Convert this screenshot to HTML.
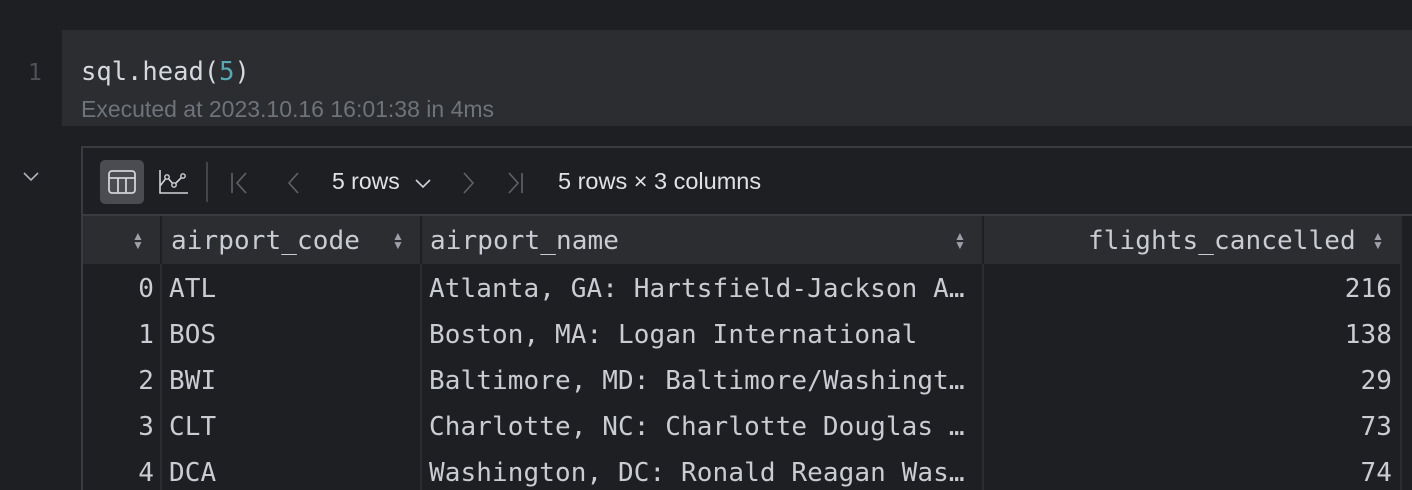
<!DOCTYPE html>
<html><head><style>
*{margin:0;padding:0;box-sizing:border-box}
html,body{width:1412px;height:490px;overflow:hidden}
body{background:#1e1f22;position:relative;font-family:"Liberation Sans",sans-serif;color:#dfe1e5}
.abs{position:absolute}
.mono{font-family:"DejaVu Sans Mono","Liberation Mono",monospace}
.code{left:62px;top:30px;width:1350px;height:96px;background:#2b2d30}
.ln{left:28px;top:60px;font-size:23px;color:#4e5157}
.tbl{left:81px;top:146px;width:1340px;height:360px;border:2px solid #393b40;border-right:none}
.hdr{left:83px;top:216px;width:1317px;height:48px;background:#2b2d30}
.vl{width:2px;background:#1e1f22}
.bl{width:2px;background:#2b2d30}
.cell{font-size:26px;color:#c9ccd2;white-space:pre;letter-spacing:0.1px}
.sort{font-size:12px;color:#9da0a8;line-height:9px;text-align:center;width:12px}
</style></head><body>
<div class="abs ln mono">1</div>
<div class="abs code"></div>
<div class="abs mono" style="left:81px;top:57px;font-size:25.5px;color:#d5d8de">sql.head(<span style="color:#56a8b5">5</span>)</div>
<div class="abs" style="left:81px;top:96px;font-size:23px;color:#6f737a">Executed at 2023.10.16 16:01:38 in 4ms</div>
<svg class="abs" style="left:22px;top:170px" width="18" height="12"><path d="M2 3 L9 10 L16 3" stroke="#aeb1b7" stroke-width="1.6" fill="none"/></svg>
<div class="abs tbl"></div>
<div class="abs" style="left:100px;top:160px;width:44px;height:44px;background:#4a4c52;border-radius:5px"></div>
<svg class="abs" style="left:107px;top:168px" width="30" height="28"><rect x="2" y="3" width="26" height="22" rx="3" stroke="#cfd2d8" stroke-width="1.8" fill="none"/><path d="M2 10H28M11 10V25M19 10V25" stroke="#cfd2d8" stroke-width="1.8"/></svg>
<svg class="abs" style="left:158px;top:168px" width="32" height="28"><path d="M2 2V25H30M2 18L9 9L16 17L25 8" stroke="#cfd2d8" stroke-width="1.6" fill="none"/><circle cx="9" cy="9" r="2.2" fill="#1e1f22" stroke="#cfd2d8" stroke-width="1.4"/><circle cx="16" cy="17" r="2.2" fill="#1e1f22" stroke="#cfd2d8" stroke-width="1.4"/><circle cx="25" cy="8" r="2.2" fill="#1e1f22" stroke="#cfd2d8" stroke-width="1.4"/></svg>
<div class="abs" style="left:206px;top:162px;width:2px;height:40px;background:#43454a"></div>
<svg class="abs" style="left:226px;top:170px" width="80" height="26"><path d="M6 3V23M20 3L11 13L20 23" stroke="#5f6268" stroke-width="1.6" fill="none"/><path d="M72 3L63 13L72 23" stroke="#5f6268" stroke-width="1.6" fill="none"/></svg>
<div class="abs" style="left:332px;top:168px;font-size:23px;color:#dfe1e5">5 rows</div>
<svg class="abs" style="left:413px;top:176px" width="20" height="14"><path d="M3 4L10 11L17 4" stroke="#cfd2d8" stroke-width="1.6" fill="none"/></svg>
<svg class="abs" style="left:456px;top:170px" width="80" height="26"><path d="M8 3L17 13L8 23" stroke="#5f6268" stroke-width="1.6" fill="none"/><path d="M53 3L62 13L53 23M66 3V23" stroke="#5f6268" stroke-width="1.6" fill="none"/></svg>
<div class="abs" style="left:558px;top:168px;font-size:23.5px;color:#dfe1e5">5 rows × 3 columns</div>
<div class="abs" style="left:83px;top:214px;width:1329px;height:2px;background:#393b40"></div>
<div class="abs hdr"></div>
<div class="abs vl" style="left:160px;top:216px;height:48px"></div>
<div class="abs vl" style="left:420px;top:216px;height:48px"></div>
<div class="abs vl" style="left:982px;top:216px;height:48px"></div>
<div class="abs bl" style="left:160px;top:264px;height:230px"></div>
<div class="abs bl" style="left:420px;top:264px;height:230px"></div>
<div class="abs bl" style="left:982px;top:264px;height:230px"></div>
<div class="abs bl" style="left:1400px;top:216px;height:280px"></div>
<div class="abs sort" style="left:132px;top:232px">▲<br>▼</div>
<div class="abs sort" style="left:392px;top:232px">▲<br>▼</div>
<div class="abs sort" style="left:954px;top:232px">▲<br>▼</div>
<div class="abs sort" style="left:1372px;top:232px">▲<br>▼</div>
<div class="abs mono cell" style="left:171px;top:226px">airport_code</div>
<div class="abs mono cell" style="left:430px;top:226px">airport_name</div>
<div class="abs mono cell" style="left:1088px;top:226px">flights_cancelled</div>
<div class="abs mono cell" style="left:120px;top:266px;line-height:46px;text-align:right;width:34px">0
1
2
3
4</div>
<div class="abs mono cell" style="left:169px;top:266px;line-height:46px">ATL
BOS
BWI
CLT
DCA</div>
<div class="abs mono cell" style="left:429px;top:266px;line-height:46px">Atlanta, GA: Hartsfield-Jackson A…
Boston, MA: Logan International
Baltimore, MD: Baltimore/Washingt…
Charlotte, NC: Charlotte Douglas …
Washington, DC: Ronald Reagan Was…</div>
<div class="abs mono cell" style="left:1272px;top:266px;line-height:46px;text-align:right;width:120px">216
138
29
73
74</div>
</body></html>
